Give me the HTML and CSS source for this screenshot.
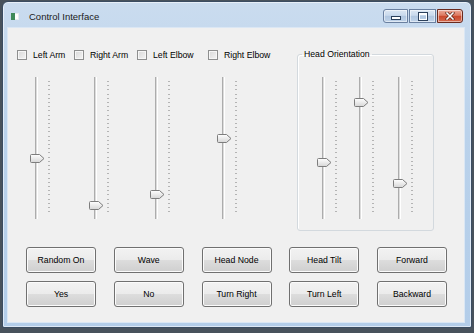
FILE: index.html
```html
<!DOCTYPE html>
<html lang="en">
<head>
    <meta charset="UTF-8">
    <meta name="viewport" content="width=device-width, initial-scale=1.0">
    <title>Control Interface</title>
    <link rel="stylesheet" href="styles.css">
</head>
<body>

    <div class="window">
        <!-- title bar -->
        <div class="titlebar">
            <svg class="app-icon" width="8" height="7" viewBox="0 0 8 7">
                <rect x="0" y="0" width="8" height="7" fill="#e8ecef"/>
                <rect x="0" y="0" width="4" height="7" fill="#3f8a5a"/>
                <rect x="4" y="1" width="3" height="5" fill="#ffffff"/>
            </svg>
            <span class="title">Control Interface</span>
            <div class="caption-buttons">
                <div class="cap-btn cap-min"><span class="glyph-min"></span></div>
                <div class="cap-btn cap-max"><span class="glyph-max"></span></div>
                <div class="cap-btn cap-close">
                    <svg width="10" height="8" viewBox="0 0 10 8">
                        <path d="M2 1 L8 7 M8 1 L2 7" stroke="#5a2418" stroke-width="3" stroke-linecap="square"/>
                        <path d="M2 1 L8 7 M8 1 L2 7" stroke="#ffffff" stroke-width="1.6" stroke-linecap="square"/>
                    </svg>
                </div>
            </div>
        </div>

        <!-- client area -->
        <div class="client">
            <div class="top-section">
                <div class="joint-panel">
                    <div class="check-row">
                        <label class="check"><span class="box"></span>Left Arm</label>
                        <label class="check"><span class="box"></span>Right Arm</label>
                        <label class="check"><span class="box"></span>Left Elbow</label>
                        <label class="check"><span class="box"></span>Right Elbow</label>
                    </div>
                    <div id="joint-sliders" class="slider-row joints"></div>
                </div>

                <fieldset class="group">
                    <legend>Head Orientation</legend>
                    <div id="head-sliders" class="slider-row head"></div>
                </fieldset>
            </div>

            <div class="button-grid">
                <button class="btn">Random On</button>
                <button class="btn">Wave</button>
                <button class="btn">Head Node</button>
                <button class="btn">Head Tilt</button>
                <button class="btn">Forward</button>
                <button class="btn">Yes</button>
                <button class="btn">No</button>
                <button class="btn">Turn Right</button>
                <button class="btn">Turn Left</button>
                <button class="btn">Backward</button>
            </div>
        </div>
    </div>

    <script>
        const jointValues = [42, 7, 15, 57];
        const headValues = [39, 84, 23];
        const TRAVEL = 133;

        function sliderHtml(value, id) {
            const top = Math.round((100 - value) / 100 * TRAVEL);
            return `
                <div class="slider">
                    <div class="track"></div>
                    <div class="ticks"></div>
                    <svg class="thumb" style="top:${top}px" width="15" height="9" viewBox="0 0 15 9">
                        <defs>
                            <linearGradient id="tg${id}" x1="0" y1="0" x2="0" y2="1">
                                <stop offset="0" stop-color="#ffffff"/>
                                <stop offset="1" stop-color="#d6d6d6"/>
                            </linearGradient>
                        </defs>
                        <path d="M1.5 0.5 H9.5 L14 4.5 L9.5 8.5 H1.5 Q0.5 8.5 0.5 7.5 V1.5 Q0.5 0.5 1.5 0.5 Z"
                              fill="url(#tg${id})" stroke="#7d7d7d"/>
                    </svg>
                </div>
            `;
        }

        document.getElementById("joint-sliders").innerHTML =
            jointValues.map((v, i) => sliderHtml(v, 'j' + i)).join('');
        document.getElementById("head-sliders").innerHTML =
            headValues.map((v, i) => sliderHtml(v, 'h' + i)).join('');
    </script>
</body>
</html>
```

FILE: styles.css
```css
body {
    margin: 0;
    padding: 1px 0 0 2px;
    background-color: #48525c;
    font-family: 'Liberation Sans', Arial, sans-serif;
    color: #000;
    width: 474px;
    height: 333px;
    box-sizing: border-box;
    overflow: hidden;
}

/* window frame */
.window {
    width: 470px;
    height: 327px;
    box-sizing: border-box;
    border: 1px solid #3b4d62;
    border-radius: 6px 6px 2px 2px;
    padding: 0 7px 5px 5px;
    background: linear-gradient(to bottom, #cadcef 0%, #bad2eb 40%, #b3cde9 100%);
    box-shadow: inset 0 0 0 1px rgba(255, 255, 255, 0.55);
}

.titlebar {
    height: 26px;
    box-sizing: border-box;
    padding: 2px 1px 0 3px;
    display: flex;
    align-items: center;
}

.app-icon {
    display: block;
    margin-right: 10px;
}

.title {
    font-size: 9.5px;
    color: #1a1a1a;
    flex: 1;
}

.caption-buttons {
    display: flex;
    gap: 1px;
}

.cap-btn {
    height: 14px;
    box-sizing: border-box;
    border: 1px solid #6a80a0;
    display: flex;
    align-items: center;
    justify-content: center;
    background: linear-gradient(to bottom, #dce7f3 0%, #c9d9ec 45%, #b0c6e0 50%, #c0d3e9 100%);
    box-shadow: inset 0 0 0 1px rgba(255, 255, 255, 0.5);
}

.cap-min {
    width: 25px;
    border-radius: 3px 0 0 3px;
}

.cap-max {
    width: 27px;
}

.cap-close {
    width: 26px;
    border-color: #6a2a1e;
    border-radius: 0 3px 3px 0;
    background: linear-gradient(to bottom, #eaa999 0%, #dc7a61 45%, #c9472b 50%, #d4694d 100%);
}

.cap-close svg {
    display: block;
}

.glyph-min {
    width: 8px;
    height: 2px;
    margin-top: 4px;
    background: #fff;
    border: 1px solid #2c405b;
}

.glyph-max {
    width: 6px;
    height: 4px;
    border: 1px solid #fff;
    border-top-width: 2px;
    outline: 1px solid #2c405b;
}

/* client area */
.client {
    height: 294px;
    background-color: #f0f0f0;
    box-shadow: 0 0 0 1px #dbe7f4;
}

.top-section {
    display: flex;
    align-items: flex-start;
    height: 203px;
}

.joint-panel {
    width: 289px;
    box-sizing: border-box;
    padding: 21px 0 0 9px;
}

.check-row {
    display: grid;
    grid-template-columns: 57px 63px 71px auto;
    height: 12px;
}

.check {
    display: flex;
    align-items: center;
    font-size: 8.7px;
    white-space: nowrap;
}

.box {
    width: 10px;
    height: 10px;
    box-sizing: border-box;
    border: 1px solid #8e8f8f;
    margin-right: 6px;
    background: linear-gradient(135deg, #d8d8d8 0%, #f4f4f4 100%);
    box-shadow: inset 0 0 0 1px #f6f6f6;
}

/* sliders */
.slider-row {
    display: grid;
}

.slider-row.joints {
    margin: 16px 0 0 13px;
    grid-template-columns: 58.5px 61px 67px 22px;
}

.slider-row.head {
    margin: 18px 0 0 18.5px;
    grid-template-columns: 37px 39px 22px;
}

.slider {
    position: relative;
    display: flex;
    width: 22px;
    height: 142px;
}

.track {
    width: 3px;
    margin-left: 5px;
    box-sizing: border-box;
    border-left: 1px solid #acacac;
    border-right: 1px solid #ffffff;
    background-color: #dcdcdc;
}

.ticks {
    width: 2px;
    margin: 4px 0 4px 10px;
    background: repeating-linear-gradient(to bottom, #b4b4b4 0, #b4b4b4 1px, transparent 1px, transparent 4.2px);
}

.thumb {
    position: absolute;
    left: 0;
    display: block;
}

/* group box */
.group {
    margin: 21px 0 0 0;
    padding: 0;
    width: 137px;
    height: 182px;
    box-sizing: border-box;
    border: 1px solid #d3d9de;
    border-radius: 3px;
    box-shadow: inset 1px 1px 0 #fff;
}

.group legend {
    margin-left: 4px;
    padding: 0 2px;
    font-size: 8.7px;
    line-height: 10px;
}

/* buttons */
.button-grid {
    display: grid;
    grid-template-columns: repeat(5, 70px);
    grid-auto-rows: 26px;
    column-gap: 17.75px;
    row-gap: 8px;
    margin-top: 16px;
    padding-left: 18px;
}

.btn {
    font-family: 'Liberation Sans', Arial, sans-serif;
    font-size: 8.7px;
    color: #000;
    padding: 0;
    border: 1px solid #707070;
    border-radius: 3px;
    background: linear-gradient(to bottom, #f2f2f2 0%, #ebebeb 50%, #dddddd 50%, #cfcfcf 100%);
    box-shadow: inset 0 0 0 1px #fbfbfb;
}
```
